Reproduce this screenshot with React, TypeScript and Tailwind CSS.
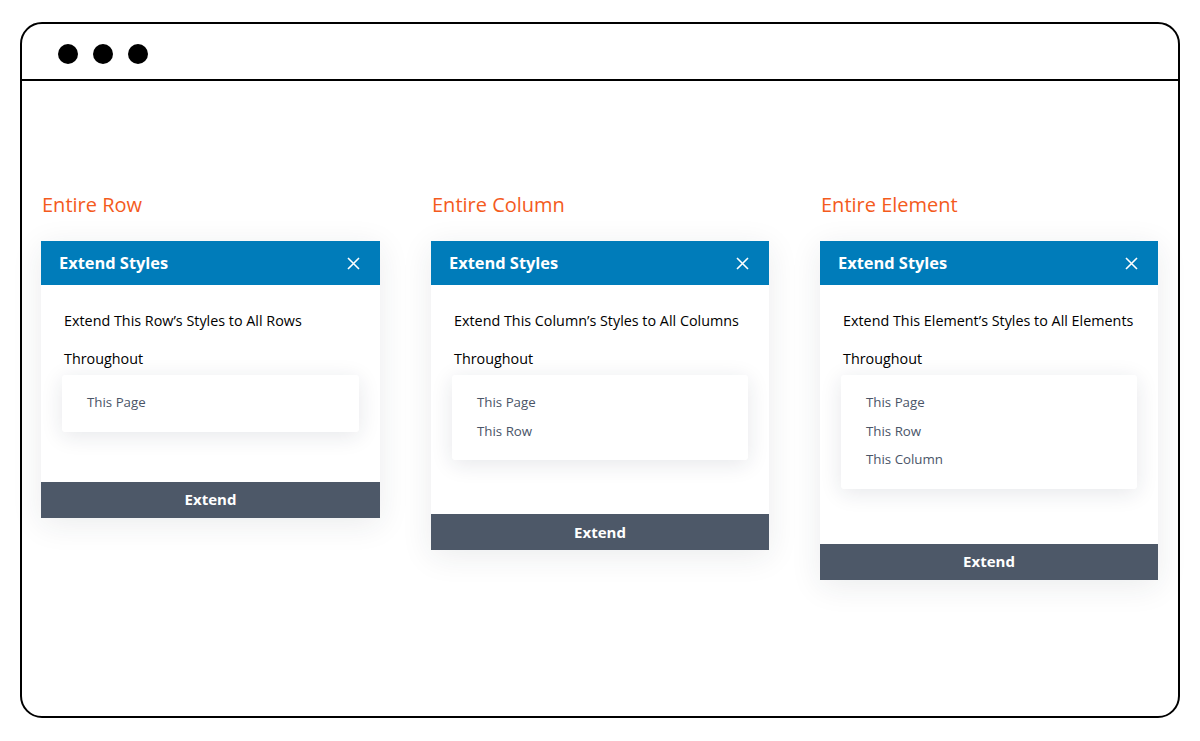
import React from "react";

type Panel = {
  label: string;
  text: string;
  items: string[];
  gap: string;
};

const panels: Panel[] = [
  { label: "Entire Row", text: "Extend This Row’s Styles to All Rows", items: ["This Page"], gap: "mt-[50px]" },
  { label: "Entire Column", text: "Extend This Column’s Styles to All Columns", items: ["This Page", "This Row"], gap: "mt-[54px]" },
  { label: "Entire Element", text: "Extend This Element’s Styles to All Elements", items: ["This Page", "This Row", "This Column"], gap: "mt-[55px]" },
];

function CloseIcon() {
  return (
    <svg width="13" height="13" viewBox="0 0 13 13" fill="none">
      <path d="M1 1L12 12M12 1L1 12" stroke="white" strokeWidth="1.6" />
    </svg>
  );
}

export default function App() {
  return (
    <div className="w-[1200px] h-[741px] bg-white pt-[22px] pl-[20px]" style={{ fontFamily: '"Open Sans", "Noto Sans", sans-serif' }}>
      <div className="w-[1160px] h-[696px] border-2 border-black rounded-[22px] flex flex-col">
        <div className="h-[57px] border-b-2 border-black flex items-center gap-[15px] pl-[36px] pt-[4px]">
          <div className="w-[20px] h-[20px] rounded-full bg-black" />
          <div className="w-[20px] h-[20px] rounded-full bg-black" />
          <div className="w-[20px] h-[20px] rounded-full bg-black" />
        </div>
        <div className="grid grid-cols-[339px_338px_338px] gap-x-[51px] pl-[19px] pt-[110px] items-start">
          {panels.map((p) => (
            <div key={p.label} className="flex flex-col">
              <div className="text-[20px] leading-[27px] text-[#f45b1d] pl-[1px]">{p.label}</div>
              <div className="mt-[23px] bg-white shadow-[0_6px_30px_rgba(30,40,60,0.09)]">
                <div className="h-[44px] bg-[#007cba] flex items-center justify-between pl-[18px] pr-[20px]">
                  <span className="text-white font-bold text-[16.4px] leading-[22px]">Extend Styles</span>
                  <CloseIcon />
                </div>
                <div className="pt-[26px] flex flex-col">
                  <div className="px-[23px] text-[14.35px] leading-[20px] text-black">{p.text}</div>
                  <div className="px-[23px] mt-[18px] text-[14.35px] leading-[20px] text-black">Throughout</div>
                  <div className="mx-[21px] mt-[6px] rounded-[3px] bg-white shadow-[0_4px_22px_rgba(30,40,60,0.11)] py-[14px] pl-[25px]">
                    {p.items.map((it) => (
                      <div key={it} className="h-[28.5px] flex items-center text-[13.3px] text-[#4a5568]">
                        {it}
                      </div>
                    ))}
                  </div>
                </div>
                <div className={`${p.gap} h-[36px] bg-[#4d5868] flex items-center justify-center text-white font-bold text-[15px]`}>
                  Extend
                </div>
              </div>
            </div>
          ))}
        </div>
      </div>
    </div>
  );
}
